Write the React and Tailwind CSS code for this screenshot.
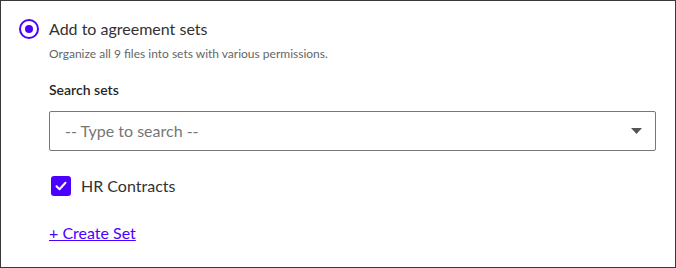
import React from "react";

export default function App() {
  return (
    <div className="w-[676px] h-[268px] bg-white border border-[#3a3a3a] font-['Lato',sans-serif] text-[#323232]">
      <div className="pl-[18px] pt-[18px]">
        <label className="flex items-center gap-[10px]">
          <span className="w-5 h-5 rounded-full border-2 border-[#4c00ff] flex items-center justify-center">
            <span className="w-2 h-2 rounded-full bg-[#4c00ff]" />
          </span>
          <span className="text-[16px] leading-5">Add to agreement sets</span>
        </label>
        <div className="pl-[30px]">
          <p className="mt-[7px] text-[12px] leading-4 text-[#666]">
            Organize all 9 files into sets with various permissions.
          </p>
          <div className="mt-[18px] text-[14px] leading-5 font-semibold text-[#262626]">Search sets</div>
          <div className="mt-[11px] w-[607px] h-[40px] rounded-[2px] border border-[#777] flex items-center justify-between pl-[15px] pr-[13px]">
            <span className="text-[16px] text-[#767676]">-- Type to search --</span>
            <svg width="11" height="6" viewBox="0 0 11 6">
              <path d="M0 0h11L5.5 6z" fill="#555" />
            </svg>
          </div>
          <label className="mt-[25px] ml-[2px] flex items-center gap-[10px]">
            <span className="w-5 h-5 rounded-[3px] bg-[#4c00ff] flex items-center justify-center">
              <svg width="12" height="10" viewBox="0 0 12 10">
                <path d="M1.5 5.2l3 3 6-6.5" fill="none" stroke="white" strokeWidth="2" strokeLinecap="round" strokeLinejoin="round" />
              </svg>
            </span>
            <span className="text-[16px] leading-5">HR Contracts</span>
          </label>
          <a href="#" className="inline-block mt-[27px] text-[16px] leading-5 text-[#4c00ff] underline">
            + Create Set
          </a>
        </div>
      </div>
    </div>
  );
}
